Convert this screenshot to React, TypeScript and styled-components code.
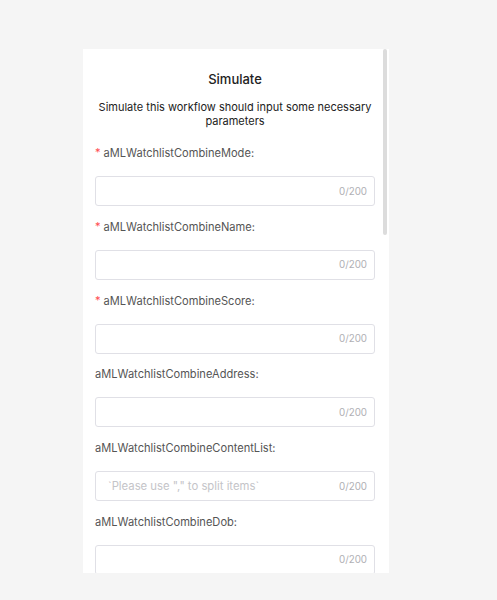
import React from 'react';
import styled, { createGlobalStyle } from 'styled-components';

const GlobalStyle = createGlobalStyle`
  html, body {
    margin: 0;
    padding: 0;
    background: #f5f5f5;
    font-family: Inter, "Noto Sans", sans-serif;
  }
`;

const Page = styled.div`
  height: 600px;
  padding: 49px 0 0 83px;
  box-sizing: border-box;
  overflow: hidden;
`;

const Panel = styled.div`
  width: 306px;
  height: 524px;
  background: #fff;
  position: relative;
  overflow: hidden;
`;

const Content = styled.div`
  padding: 19px 14px 0 12px;
`;

// overlay scrollbar thumb on the right edge
const ScrollThumb = styled.div`
  position: absolute;
  top: 0;
  right: 2px;
  width: 4px;
  height: 186px;
  background: #dcdcdc;
  border-radius: 2px;
`;

const Title = styled.div`
  text-align: center;
  font-size: 13px;
  font-weight: 500;
  line-height: 22px;
  color: #222;
`;

const Desc = styled.div`
  text-align: center;
  font-size: 11px;
  line-height: 14px;
  color: #222;
  margin: 10px -4px 15px;
`;

const Field = styled.div`
  margin-bottom: 10.8px;
`;

const Label = styled.div`
  font-size: 11.1px;
  line-height: 20px;
  color: #555;
  margin-bottom: 13px;
  .req {
    color: #ff4d4f;
    margin-right: 3px;
  }
`;

const InputBox = styled.div`
  height: 30px;
  box-sizing: border-box;
  border: 1px solid #e0e0e6;
  border-radius: 3px;
  display: flex;
  align-items: center;
  padding: 0 7px 0 12px;
`;

const Placeholder = styled.span`
  flex: 1;
  font-size: 11.3px;
  color: #c4c4c8;
`;

const Count = styled.span`
  font-size: 9.8px;
  color: #b0b0b4;
`;

type Param = { name: string; required?: boolean; placeholder?: string };

const params: Param[] = [
  { name: 'aMLWatchlistCombineMode', required: true },
  { name: 'aMLWatchlistCombineName', required: true },
  { name: 'aMLWatchlistCombineScore', required: true },
  { name: 'aMLWatchlistCombineAddress' },
  { name: 'aMLWatchlistCombineContentList', placeholder: '`Please use "," to split items`' },
  { name: 'aMLWatchlistCombineDob' },
];

const App: React.FC = () => {
  return (
    <Page>
      <GlobalStyle />
      <Panel>
        <Content>
          <Title>Simulate</Title>
          <Desc>Simulate this workflow should input some necessary parameters</Desc>
          {params.map((p) => (
            <Field key={p.name}>
              <Label>
                {p.required && <span className="req">*</span>}
                {p.name}:
              </Label>
              <InputBox>
                <Placeholder>{p.placeholder || ''}</Placeholder>
                <Count>0/200</Count>
              </InputBox>
            </Field>
          ))}
        </Content>
        <ScrollThumb />
      </Panel>
    </Page>
  );
};

export default App;
